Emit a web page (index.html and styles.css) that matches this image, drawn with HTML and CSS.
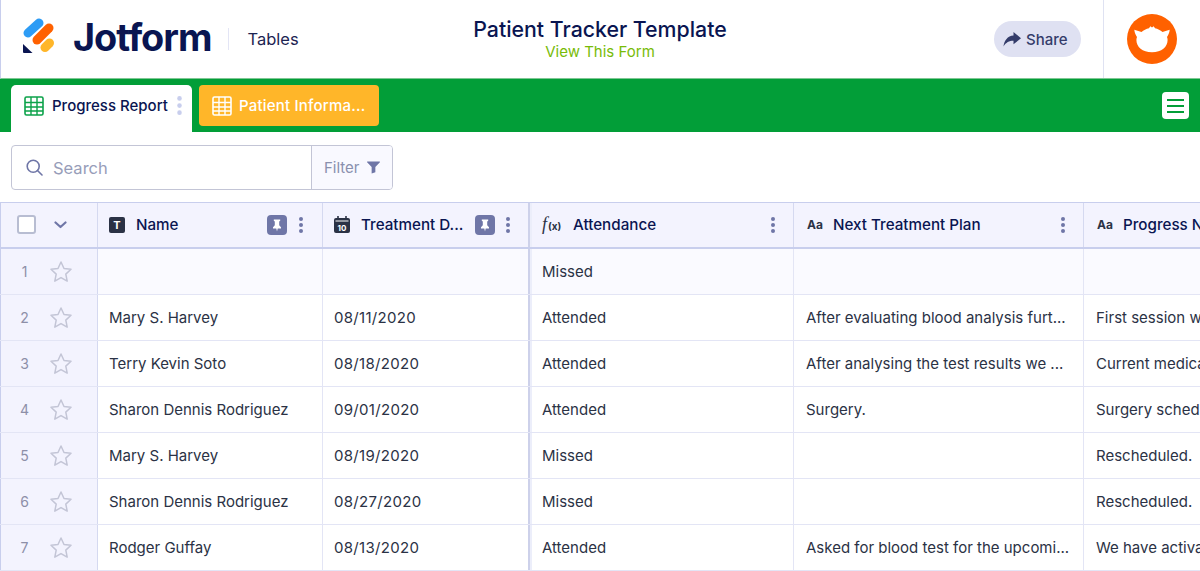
FILE: index.html
```html
<!DOCTYPE html>
<html lang="en">

<head>
    <meta charset="UTF-8">
    <meta name="viewport" content="width=device-width, initial-scale=1.0">
    <link rel="stylesheet" href="styles.css">
</head>

<body>
    <svg class="defs" width="0" height="0">
        <symbol id="star" viewBox="0 0 22 22">
            <path d="M11 1l3 6.500 7 .8-5.200 4.800 1.400 7L11 16.600 4.800 20.100l1.400-7L1 8.300l7-.8z" fill="none" stroke="#c3c5d6" stroke-width="1.500" stroke-linejoin="round" />
        </symbol>
        <symbol id="dots" viewBox="0 0 4 16">
            <circle cx="2" cy="2" r="2" />
            <circle cx="2" cy="8" r="2" />
            <circle cx="2" cy="14" r="2" />
        </symbol>
        <symbol id="pin" viewBox="0 0 20 20">
            <rect width="20" height="20" rx="4" fill="#6f76a7" />
            <path d="M6.800 4.500h6.400v1.300l-1 .6v3.800l1.800 2v1.300h-3.300l-.7 3-.7-3H6v-1.300l1.800-2V6.400l-1-.6z" fill="#fff" />
        </symbol>
        <symbol id="grid" viewBox="0 0 20 20">
            <rect x="1" y="1" width="18" height="18" rx="1.500" fill="none" stroke="currentColor" stroke-width="1.600" />
            <path d="M1 6.500h18M1 11h18M1 15h18M7 1v18M13 1v18" stroke="currentColor" stroke-width="1.400" />
        </symbol>
    </svg>

    <header class="topbar">
        <div class="brand">
            <svg class="logo-mark" width="33" height="36" viewBox="0 0 33 36" fill="none" stroke-width="9" stroke-linecap="round">
                <path d="M6 15L17 5" stroke="#2d9cf5" />
                <path d="M15 22L27 10" stroke="#ff6100" />
                <path d="M23 29.500L27.500 25" stroke="#ffb629" />
                <path d="M1 26v8a1 1 0 0 0 1 1h8.500z" fill="#0a1551" stroke="none" />
            </svg>
            <span class="logo-text">Jotform</span>
            <span class="brand-sep"></span>
            <span class="brand-sub">Tables</span>
        </div>
        <div class="title-block">
            <div class="title">Patient Tracker Template</div>
            <div class="view-link">View This Form</div>
        </div>
        <div class="share-wrap">
            <button class="share-btn" type="button">
                <svg width="18" height="15" viewBox="0 0 18 15">
                    <path d="M10.500 0L18 6.300l-7.500 6V8.800C6 8.800 3 10.500.5 14.500 1.200 8.500 4.500 4 10.500 3.500z" fill="#343c6a" />
                </svg>
                Share
            </button>
        </div>
        <div class="avatar-wrap">
            <svg width="50" height="50" viewBox="0 0 50 50">
                <circle cx="25" cy="25" r="25" fill="#ff6100" />
                <path d="M7.300 15.700l7.200 2.300c2-1.700 4.800-3.200 7.500-3.700l1.300-2 1.700 1.300 1.700-1.300 1.300 2c2.700.5 5.500 2 7.500 3.700l7.200-2.300c-.3 3-1.400 5.500-2.700 7.300.4 1 .6 2 .6 3.100 0 7-6 12.200-15.600 12.200S9.400 33.100 9.400 26.100c0-1.100.2-2.100.6-3.100-1.300-1.800-2.400-4.300-2.700-7.300z" fill="#fff" />
            </svg>
        </div>
    </header>

    <nav class="tabbar">
        <div class="tab tab-active">
            <svg class="tab-grid" width="20" height="20">
                <use href="#grid" />
            </svg>
            <span>Progress Report</span>
            <svg class="tab-dots" width="5" height="19" viewBox="0 0 4 16" fill="#c8ceed">
                <use href="#dots" width="4" height="16" />
            </svg>
        </div>
        <div class="tab tab-other">
            <svg class="tab-grid" width="20" height="20">
                <use href="#grid" />
            </svg>
            <span>Patient Informa...</span>
        </div>
        <button class="menu-btn" type="button"><i></i><i></i><i></i></button>
    </nav>

    <div class="toolbar">
        <div class="search-box">
            <div class="search-field">
                <svg width="17" height="17" viewBox="0 0 17 17" fill="none" stroke="#6f76a7" stroke-width="1.600">
                    <circle cx="7.200" cy="7.200" r="6" />
                    <path d="M11.500 11.500l4.500 4.500" stroke-linecap="round" />
                </svg>
                <span>Search</span>
            </div>
            <div class="filter-btn">
                Filter
                <svg width="13" height="13" viewBox="0 0 14 13">
                    <path d="M.5 0h13a.5.5 0 0 1 .4.8L9 6v5.500L5 13V6L.1.800A.5.5 0 0 1 .5 0z" fill="#6f76a7" />
                </svg>
            </div>
        </div>
    </div>

    <div class="sheet">
        <div class="row head-row">
            <div class="cell first">
                <span class="checkbox"></span>
                <svg width="13" height="8" viewBox="0 0 13 8" fill="none" stroke="#6f76a7" stroke-width="2.200">
                    <path d="M1.500 1.500l5 4.500 5-4.500" stroke-linecap="round" stroke-linejoin="round" />
                </svg>
            </div>
            <div class="cell">
                <span class="type-t">T</span>
                <span class="col-name">Name</span>
                <svg class="pin" width="20" height="20"><use href="#pin" /></svg>
                <svg class="more" width="4" height="16"><use href="#dots" /></svg>
            </div>
            <div class="cell">
                <svg class="type-date" width="16" height="17" viewBox="0 0 16 17">
                    <rect y="2" width="16" height="15" rx="2" fill="#2b3245" />
                    <path d="M4 0v3M12 0v3" stroke="#2b3245" stroke-width="1.600" />
                    <path d="M1.500 5h13" stroke="#fff" />
                    <text x="8" y="14.500" text-anchor="middle" class="date-num">10</text>
                </svg>
                <span class="col-name">Treatment D...</span>
                <svg class="pin" width="20" height="20"><use href="#pin" /></svg>
                <svg class="more" width="4" height="16"><use href="#dots" /></svg>
            </div>
            <div class="cell">
                <span class="type-fx"><em>f</em><b>(x)</b></span>
                <span class="col-name">Attendance</span>
                <svg class="more push" width="4" height="16"><use href="#dots" /></svg>
            </div>
            <div class="cell">
                <span class="type-aa">Aa</span>
                <span class="col-name">Next Treatment Plan</span>
                <svg class="more push" width="4" height="16"><use href="#dots" /></svg>
            </div>
            <div class="cell">
                <span class="type-aa">Aa</span>
                <span class="col-name">Progress Notes</span>
            </div>
        </div>

        <div class="row tinted">
            <div class="cell first"><span class="num">1</span><svg class="star" width="22" height="22"><use href="#star" /></svg></div>
            <div class="cell"></div>
            <div class="cell"></div>
            <div class="cell">Missed</div>
            <div class="cell"></div>
            <div class="cell"></div>
        </div>
        <div class="row">
            <div class="cell first"><span class="num">2</span><svg class="star" width="22" height="22"><use href="#star" /></svg></div>
            <div class="cell">Mary S. Harvey</div>
            <div class="cell date">08/11/2020</div>
            <div class="cell">Attended</div>
            <div class="cell">After evaluating blood analysis furt...</div>
            <div class="cell">First session was</div>
        </div>
        <div class="row">
            <div class="cell first"><span class="num">3</span><svg class="star" width="22" height="22"><use href="#star" /></svg></div>
            <div class="cell">Terry Kevin Soto</div>
            <div class="cell date">08/18/2020</div>
            <div class="cell">Attended</div>
            <div class="cell">After analysing the test results we ...</div>
            <div class="cell">Current medication</div>
        </div>
        <div class="row">
            <div class="cell first"><span class="num">4</span><svg class="star" width="22" height="22"><use href="#star" /></svg></div>
            <div class="cell">Sharon Dennis Rodriguez</div>
            <div class="cell date">09/01/2020</div>
            <div class="cell">Attended</div>
            <div class="cell">Surgery.</div>
            <div class="cell">Surgery scheduled</div>
        </div>
        <div class="row">
            <div class="cell first"><span class="num">5</span><svg class="star" width="22" height="22"><use href="#star" /></svg></div>
            <div class="cell">Mary S. Harvey</div>
            <div class="cell date">08/19/2020</div>
            <div class="cell">Missed</div>
            <div class="cell"></div>
            <div class="cell">Rescheduled.</div>
        </div>
        <div class="row">
            <div class="cell first"><span class="num">6</span><svg class="star" width="22" height="22"><use href="#star" /></svg></div>
            <div class="cell">Sharon Dennis Rodriguez</div>
            <div class="cell date">08/27/2020</div>
            <div class="cell">Missed</div>
            <div class="cell"></div>
            <div class="cell">Rescheduled.</div>
        </div>
        <div class="row">
            <div class="cell first"><span class="num">7</span><svg class="star" width="22" height="22"><use href="#star" /></svg></div>
            <div class="cell">Rodger Guffay</div>
            <div class="cell date">08/13/2020</div>
            <div class="cell">Attended</div>
            <div class="cell">Asked for blood test for the upcomi...</div>
            <div class="cell">We have activated</div>
        </div>
    </div>
</body>

</html>
```

FILE: styles.css
```css
* {
    box-sizing: border-box;
}

html,
body {
    height: 100%;
}

body {
    font-family: Inter, 'Noto Sans', sans-serif;
    background-color: #fff;
    color: #2b3245;
    margin: 0;
    overflow: hidden;
}

.defs {
    display: block;
}

.topbar {
    display: flex;
    height: 79px;
    border-left: 1px solid #c8ceed;
    border-bottom: 1px solid #7fc794;
}

.brand {
    display: flex;
    align-items: center;
    width: 360px;
    padding-left: 21px;
}

.logo-mark {
    margin-top: -6px;
    flex-shrink: 0;
}

.logo-text {
    margin-left: 18px;
    margin-top: -4px;
    font-size: 37.800px;
    font-weight: 700;
    letter-spacing: -1px;
    color: #0a1551;
}

.brand-sep {
    width: 1px;
    height: 22px;
    margin-left: 17px;
    background-color: #e3e5f5;
}

.brand-sub {
    margin-left: 18px;
    font-size: 16.500px;
    color: #1c2452;
}

.title-block {
    width: 478px;
    padding-top: 16px;
    text-align: center;
}

.title {
    font-size: 21.300px;
    font-weight: 500;
    line-height: 27px;
    color: #0a1551;
}

.view-link {
    font-size: 15px;
    line-height: 18px;
    color: #78bb07;
}

.share-wrap {
    display: flex;
    flex: 1;
    align-items: center;
    padding-left: 155px;
}

.share-btn {
    display: flex;
    align-items: center;
    gap: 5px;
    height: 36px;
    width: 87px;
    padding: 0 0 0 9px;
    border: none;
    border-radius: 18px;
    background-color: #dfe1f2;
    color: #343c6a;
    font-family: inherit;
    font-size: 15px;
    font-weight: 500;
}

.avatar-wrap {
    display: flex;
    align-items: center;
    justify-content: center;
    width: 97px;
    border-left: 1px solid #dfe2f2;
}

.tabbar {
    display: flex;
    align-items: flex-start;
    height: 53px;
    padding: 6px 11px 0 11px;
    background-color: #029e38;
}

.tab {
    display: flex;
    align-items: center;
    font-size: 15px;
    font-weight: 500;
}

.tab-active {
    width: 181px;
    height: 47px;
    padding: 0 0 6px 13px;
    border-radius: 5px 5px 0 0;
    background-color: #fff;
    color: #0a1551;
}

.tab-active .tab-grid {
    color: #0ca24a;
}

.tab-active span {
    margin-left: 8px;
    white-space: nowrap;
}

.tab-dots {
    margin-left: 9px;
    flex-shrink: 0;
}

.tab-other {
    width: 180px;
    height: 41px;
    margin-left: 7px;
    padding-left: 13px;
    border-radius: 4px;
    background-color: #ffb629;
    color: #fff;
}

.tab-other span {
    margin-left: 7px;
    letter-spacing: 0.2px;
    white-space: nowrap;
}

.menu-btn {
    display: flex;
    flex-direction: column;
    justify-content: center;
    gap: 4px;
    width: 27px;
    height: 27px;
    margin: 7px 0 0 auto;
    padding: 0 5px;
    border: none;
    border-radius: 4px;
    background-color: #fff;
}

.menu-btn i {
    display: block;
    height: 2px;
    background-color: #029e38;
}

.toolbar {
    height: 70px;
    padding: 13px 0 0 11px;
}

.search-box {
    display: flex;
    width: 382px;
    height: 45px;
    border: 1px solid #c3c5d6;
    border-radius: 4px;
    overflow: hidden;
}

.search-field {
    display: flex;
    align-items: center;
    gap: 10px;
    width: 299px;
    padding-left: 14px;
    font-size: 16.500px;
    color: #979db9;
}

.filter-btn {
    display: flex;
    flex: 1;
    align-items: center;
    gap: 7px;
    padding-left: 12px;
    border-left: 1px solid #c3c5d6;
    background-color: #f9f9ff;
    font-size: 15px;
    color: #8a90ae;
}

.sheet {
    border-top: 1px solid #c8ceed;
}

.row {
    display: grid;
    grid-template-columns: 98px 225px 207px 264px 290px 1fr;
    height: 46px;
    border-bottom: 1px solid #e3e5f5;
    font-size: 15px;
}

.head-row {
    border-bottom: 2px solid #c8ceed;
    background-color: #f3f3fe;
    font-size: 15.200px;
    font-weight: 500;
    color: #0a1551;
}

.tinted {
    background-color: #fafaff;
}

.cell {
    display: flex;
    align-items: center;
    min-width: 0;
    padding-left: 12px;
    border-right: 1px solid #e3e5f5;
    white-space: nowrap;
    overflow: hidden;
}

.head-row .cell {
    padding-bottom: 1px;
    border-right-color: #d5d9f0;
}

.cell:nth-child(2),
.cell:nth-child(3) {
    padding-left: 11px;
}

.row .cell:nth-child(3) {
    border-right: 2px solid #cdd1ea;
    box-shadow: 2px 0 0 #eceefa;
}

.cell:last-child {
    border-right: none;
}

.date {
    letter-spacing: 0.3px;
}

.first {
    padding-left: 0;
    background-color: #f3f3fe;
    border-left: 1px solid #c8ceed;
    border-right-color: #d5d9f0;
}

.num {
    width: 48px;
    padding-right: 1px;
    text-align: center;
    font-size: 14px;
    color: #8d8fa8;
}

.star {
    flex-shrink: 0;
    margin-left: 1px;
}

.checkbox {
    width: 19px;
    height: 19px;
    margin: 0 18px 0 16px;
    border: 2px solid #b8bdd2;
    border-radius: 3px;
    background-color: #fff;
}

.col-name {
    margin-left: 11px;
    flex: 0 1 auto;
}

.type-t {
    display: flex;
    align-items: center;
    justify-content: center;
    width: 16px;
    height: 16px;
    border-radius: 2px;
    background-color: #2b3245;
    color: #fff;
    font-size: 11px;
    font-weight: 700;
}

.date-num {
    font-family: Inter, sans-serif;
    font-size: 8px;
    font-weight: 700;
    fill: #fff;
}

.type-fx {
    display: flex;
    align-items: baseline;
    width: 20px;
    color: #2b3245;
}

.type-fx em {
    font-family: 'Liberation Serif', serif;
    font-size: 18px;
}

.type-fx b {
    margin-left: 1px;
    font-size: 10px;
}

.type-aa {
    width: 15px;
    margin-left: 1px;
    font-size: 12px;
    font-weight: 700;
    color: #2b3245;
}

.pin {
    margin-left: auto;
    flex-shrink: 0;
}

.more {
    flex-shrink: 0;
    margin: 0 19px 0 12px;
    fill: #6f76a7;
}

.cell:nth-child(3) .more {
    margin: 0 18px 0 11px;
}

.cell .push {
    margin: 0 18px 0 auto;
}
```
